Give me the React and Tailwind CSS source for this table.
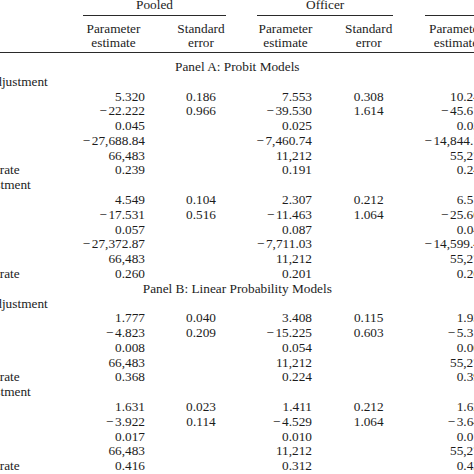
import React from 'react';

const MINUS = '\u2212';

// one row of the body: [label, pooledEst, pooledSe, officerEst, officerSe, thirdEst]
const panelA = [
  { label: 'Without adjustment', shift: 'wo' },
  { v: ['5.320', '0.186', '7.553', '0.308', '10.241'] },
  { v: [`${MINUS}22.222`, '0.966', `${MINUS}39.530`, '1.614', `${MINUS}45.618`] },
  { v: ['0.045', '', '0.025', '', '0.031'] },
  { v: [`${MINUS}27,688.84`, '', `${MINUS}7,460.74`, '', `${MINUS}14,844.19`] },
  { v: ['66,483', '', '11,212', '', '55,271'] },
  { label: 'Predicted default rate', shift: 'rate', v: ['0.239', '', '0.191', '', '0.247'] },
  { label: 'With adjustment', shift: 'wo' },
  { v: ['4.549', '0.104', '2.307', '0.212', '6.512'] },
  { v: [`${MINUS}17.531`, '0.516', `${MINUS}11.463`, '1.064', `${MINUS}25.607`] },
  { v: ['0.057', '', '0.087', '', '0.048'] },
  { v: [`${MINUS}27,372.87`, '', `${MINUS}7,711.03`, '', `${MINUS}14,599.42`] },
  { v: ['66,483', '', '11,212', '', '55,271'] },
  { label: 'Predicted default rate', shift: 'rate', v: ['0.260', '', '0.201', '', '0.268'] },
];

const panelB = [
  { label: 'Without adjustment', shift: 'wo' },
  { v: ['1.777', '0.040', '3.408', '0.115', '1.934'] },
  { v: [`${MINUS}4.823`, '0.209', `${MINUS}15.225`, '0.603', `${MINUS}5.318`] },
  { v: ['0.008', '', '0.054', '', '0.006'] },
  { v: ['66,483', '', '11,212', '', '55,271'] },
  { label: 'Predicted default rate', shift: 'rate', v: ['0.368', '', '0.224', '', '0.395'] },
  { label: 'With adjustment', shift: 'wo' },
  { v: ['1.631', '0.023', '1.411', '0.212', '1.627'] },
  { v: [`${MINUS}3.922`, '0.114', `${MINUS}4.529`, '1.064', `${MINUS}3.641`] },
  { v: ['0.017', '', '0.010', '', '0.019'] },
  { v: ['66,483', '', '11,212', '', '55,271'] },
  { label: 'Predicted default rate', shift: 'rate', v: ['0.416', '', '0.312', '', '0.433'] },
];

const cols = 'grid grid-cols-[70px_87px_88px_81px_85.4px_89.2px]';

// the typeset minus in the source sits a little wider than the font's glyph
const Num = ({ value }) => {
  if (value.startsWith(MINUS)) {
    return (
      <>
        <span className="mr-[1.5px]">{MINUS}</span>
        {value.slice(1)}
      </>
    );
  }
  return value;
};

const Row = ({ row }) => {
  const v = row.v || ['', '', '', '', ''];
  return (
    <>
      <div className="overflow-hidden whitespace-nowrap">
        {row.label && (
          <span className={row.shift === 'rate' ? 'inline-block -ml-[94px]' : 'inline-block -ml-[57px]'}>
            {row.label}
          </span>
        )}
      </div>
      <div className="text-right pr-[12px] whitespace-nowrap"><Num value={v[0]} /></div>
      <div className="text-center whitespace-nowrap">{v[1]}</div>
      <div className="text-right pr-[14px] whitespace-nowrap"><Num value={v[2]} /></div>
      <div className="text-center whitespace-nowrap">{v[3]}</div>
      <div className="text-right pr-[14px] whitespace-nowrap"><Num value={v[4]} /></div>
    </>
  );
};

const PanelTitle = ({ children }) => (
  <div className="col-span-6 text-center pr-[26px] whitespace-nowrap">{children}</div>
);

export default function App() {
  return (
    <div className="w-[474px] h-[474px] overflow-hidden bg-white text-[#1c1c1c] font-['Liberation_Serif','Times_New_Roman',serif] text-[13.3px]">
      <div className="w-[501px]">
        {/* group headers */}
        <div className={`${cols} leading-[9px]`}>
          <div />
          <div className="col-span-2 ml-[13px] mr-[19px] pb-[6px] border-b border-[#2a2a2a] text-center">Pooled</div>
          <div className="col-span-2 ml-[12px] mr-[18px] pb-[6px] border-b border-[#2a2a2a] text-center">Officer</div>
          <div className="ml-[14px] pb-[6px] border-b border-[#2a2a2a]">&nbsp;</div>
        </div>

        {/* column headers */}
        <div className={`${cols} leading-[14px] pt-[6px] pb-[2px] border-b border-[#2a2a2a] text-center`}>
          <div />
          <div>Parameter<br />estimate</div>
          <div>Standard<br />error</div>
          <div>Parameter<br />estimate</div>
          <div>Standard<br />error</div>
          <div>Parameter<br />estimate</div>
        </div>

        {/* body */}
        <div className={`${cols} auto-rows-[14.79px] leading-[14.79px] pt-[7px]`}>
          <PanelTitle>Panel A: Probit Models</PanelTitle>
          {panelA.map((r, i) => (
            <Row key={`a${i}`} row={r} />
          ))}
          <PanelTitle>Panel B: Linear Probability Models</PanelTitle>
          {panelB.map((r, i) => (
            <Row key={`b${i}`} row={r} />
          ))}
        </div>
      </div>
    </div>
  );
}
